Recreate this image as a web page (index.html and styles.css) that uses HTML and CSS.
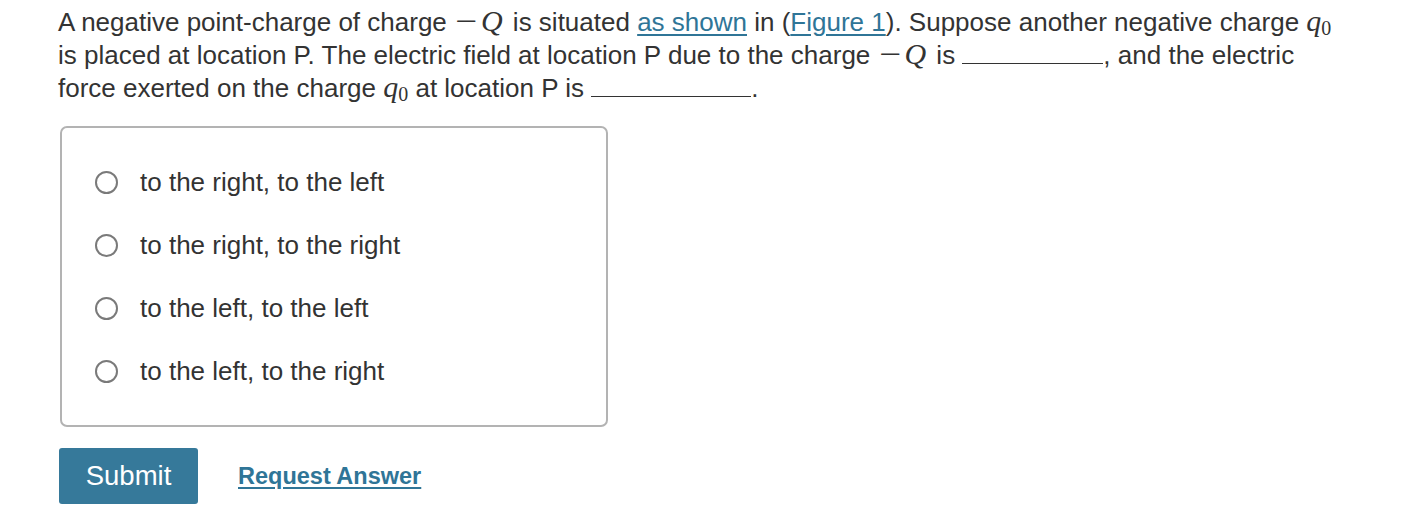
FILE: index.html
```html
<!DOCTYPE html>
<html>
<head>
<meta charset="utf-8">
<link rel="stylesheet" href="styles.css">
</head>
<body>
<div class="page">
  <p class="question">A negative point-charge of charge <span class="math"><span class="minus">−</span><i class="q">Q</i></span> is situated <a class="link" href="#">as shown</a> in (<a class="link" href="#">Figure 1</a>). Suppose another negative charge <span class="math"><i>q</i><sub>0</sub></span> is placed at location P. The electric field at location P due to the charge <span class="math"><span class="minus">−</span><i class="q">Q</i></span> is <span class="blank b1"></span>, and the electric force exerted on the charge <span class="math"><i>q</i><sub>0</sub></span> at location P is <span class="blank b2"></span>.</p>
  <div class="choices">
    <label class="choice"><span class="radio"></span><span class="label">to the right, to the left</span></label>
    <label class="choice"><span class="radio"></span><span class="label">to the right, to the right</span></label>
    <label class="choice"><span class="radio"></span><span class="label">to the left, to the left</span></label>
    <label class="choice"><span class="radio"></span><span class="label">to the left, to the right</span></label>
  </div>
  <div class="actions">
    <button class="submit">Submit</button>
    <a class="request" href="#">Request Answer</a>
  </div>
</div>
</body>
</html>
```
FILE: styles.css
```css
html, body {
  margin: 0;
  padding: 0;
  background: #fff;
}
body {
  font-family: "Liberation Sans", Arial, sans-serif;
  color: #333;
}
.page {
  padding: 6px 0 0 58px;
}
.question {
  margin: 0;
  width: 1290px;
  font-size: 26px;
  line-height: 33px;
}
.math {
  font-family: "Liberation Serif", "Times New Roman", serif;
  font-size: 30px;
  white-space: nowrap;
  line-height: 0;
}
.math i {
  font-style: italic;
}
.math .q {
  margin-right: 3px;
}
.minus {
  display: inline-block;
  margin: 0 6px 0 4px;
  transform: scaleX(1.3);
}
.math sub {
  font-style: normal;
  font-size: 20px;
  vertical-align: -4px;
  line-height: 0;
}
.link {
  color: #2f7597;
  text-decoration: underline;
  text-underline-offset: 3px;
}
.blank {
  display: inline-block;
  border-bottom: 1px solid #333;
  vertical-align: baseline;
  height: 0;
}
.b1 { width: 141px; }
.b2 { width: 160px; }
.choices {
  margin-top: 21px;
  margin-left: 2px;
  width: 548px;
  height: 301px;
  box-sizing: border-box;
  border: 2px solid #b3b3b3;
  border-radius: 7px;
  padding: 39px 0 0 33px;
  display: flex;
  flex-direction: column;
  gap: 33px;
}
.choice {
  display: flex;
  align-items: center;
  gap: 22px;
  height: 30px;
  font-size: 26px;
}
.radio {
  width: 23px;
  height: 23px;
  border: 2px solid #7a7a7a;
  border-radius: 50%;
  box-sizing: border-box;
  flex: none;
}
.actions {
  margin-top: 21px;
  margin-left: 1px;
  display: flex;
  align-items: center;
  gap: 40px;
}
.submit {
  width: 139px;
  height: 56px;
  background: #36799a;
  color: #fff;
  border: none;
  border-radius: 3px;
  font-family: "Liberation Sans", Arial, sans-serif;
  font-size: 27.5px;
  padding: 0;
}
.request {
  color: #2f7597;
  font-weight: bold;
  font-size: 23.5px;
  text-decoration: underline;
  text-underline-offset: 3px;
}
```
